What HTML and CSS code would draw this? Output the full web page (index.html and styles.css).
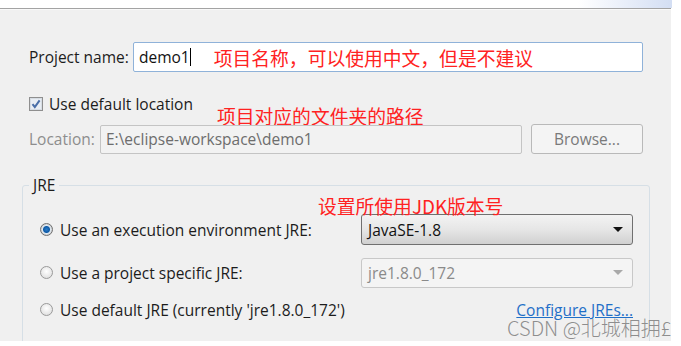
FILE: index.html
```html
<!DOCTYPE html>
<html lang="zh-CN">
  <head>
    <meta charset="UTF-8" />
    <title>New Java Project</title>
    <link rel="stylesheet" href="styles.css">
  </head>
  <body>
    <div class="topbar">
      <div class="topbar-glow"></div>
    </div>

    <div class="panel">
      <div class="name-row">
        <label class="field-label">Project name:</label>
        <div class="text-input">
          <span>demo1</span><span class="caret"></span>
          <span class="note note-inline">项目名称，可以使用中文，但是不建议</span>
        </div>
      </div>

      <div class="check-row">
        <span class="checkbox">
          <svg width="14" height="14" viewBox="0 0 14 14">
            <rect x="0.5" y="0.5" width="13" height="13" fill="#f4f4f4" stroke="#8f8f8f"/>
            <rect x="1.5" y="1.5" width="11" height="11" fill="#e9eef4" stroke="#d7dde4"/>
            <path d="M3.5 7.2 L5.8 10 L10.6 3.4" fill="none" stroke="#4a6fa8" stroke-width="2"/>
          </svg>
        </span>
        <span>Use default location</span>
        <span class="note note-location">项目对应的文件夹的路径</span>
      </div>

      <div class="loc-row">
        <label class="field-label field-label-muted">Location:</label>
        <div class="text-input text-input-disabled">E:\eclipse-workspace\demo1</div>
        <button class="browse">Browse...</button>
      </div>

      <fieldset class="jre-group">
        <legend>JRE</legend>
        <span class="note note-jdk">设置所使用JDK版本号</span>

        <div class="jre-row">
          <div class="option">
            <span class="radio radio-on"></span>
            <span>Use an execution environment JRE:</span>
          </div>
          <div class="combo">
            <span>JavaSE-1.8</span>
            <span class="combo-arrow"></span>
          </div>
        </div>

        <div class="jre-row">
          <div class="option">
            <span class="radio"></span>
            <span>Use a project specific JRE:</span>
          </div>
          <div class="combo combo-disabled">
            <span>jre1.8.0_172</span>
            <span class="combo-arrow"></span>
          </div>
        </div>

        <div class="jre-row jre-row-last">
          <div class="option">
            <span class="radio"></span>
            <span>Use default JRE (currently 'jre1.8.0_172')</span>
          </div>
          <a class="configure" href="#">Configure JREs...</a>
        </div>
      </fieldset>
    </div>

    <div class="watermark">CSDN @北城相拥£</div>
  </body>
</html>
```
FILE: styles.css
```css
* {
  margin: 0;
  padding: 0;
  box-sizing: border-box;
}

body {
  background: #ffffff;
  color: #1c1c1c;
  font-family: 'Open Sans', 'Noto Sans CJK SC', sans-serif;
  font-size: 15.5px;
  overflow: hidden;
}

.topbar {
  height: 8px;
  width: 672px;
  display: flex;
}

.topbar-glow {
  margin-left: auto;
  width: 94px;
  background: linear-gradient(to right, #ffffff, #d3def3);
}

.panel {
  position: relative;
  width: 671px;
  height: 333px;
  background: #f0f0f0;
  border-top: 1px solid #a3a3a3;
  box-shadow: inset 0 1px #f9f9f9;
  padding: 33px 0 0 22px;
  overflow: hidden;
}

.field-label {
  flex: none;
  padding-left: 7px;
}

.field-label-muted {
  color: #8d8d8d;
}

.name-row {
  display: flex;
  align-items: center;
  height: 30px;
}

.name-row .field-label {
  width: 111px;
}

.text-input {
  position: relative;
  display: flex;
  align-items: center;
  width: 510px;
  height: 30px;
  padding-left: 5px;
  background: #ffffff;
  border: 1px solid #8fb2d9;
  border-radius: 2px;
  color: #111111;
}

.caret {
  width: 1px;
  height: 18px;
  background: #000000;
}

.note {
  color: #ff2222;
  font-family: 'Noto Sans CJK SC', sans-serif;
  font-size: 18.8px;
  white-space: nowrap;
}

.note-inline {
  margin-left: 23px;
}

.check-row {
  position: relative;
  display: flex;
  align-items: center;
  gap: 6px;
  height: 16px;
  margin-top: 24px;
  padding-left: 7px;
}

.checkbox {
  display: flex;
}

.note-location {
  position: absolute;
  left: 195px;
  top: 6px;
}

.loc-row {
  display: flex;
  align-items: center;
  height: 30px;
  margin-top: 12px;
}

.loc-row .field-label {
  width: 78px;
}

.text-input-disabled {
  width: 422px;
  height: 29px;
  background: #f2f2f2;
  border-color: #c4c4c4;
  color: #6d6d6d;
}

.browse {
  width: 112px;
  height: 30px;
  margin-left: 9px;
  background: #f4f4f4;
  border: 1px solid #b9b9b9;
  border-radius: 3px;
  color: #7a7a7a;
  font-family: inherit;
  font-size: 15.5px;
}

.jre-group {
  position: relative;
  width: 628px;
  height: 200px;
  margin-top: 20px;
  padding: 18px 0 0 17px;
  border: 1px solid #d6dfe6;
  border-radius: 3px;
}

.jre-group legend {
  margin-left: -11px;
  padding: 0 4px;
}

.note-jdk {
  position: absolute;
  left: 295px;
  top: -4px;
}

.jre-row {
  display: flex;
  align-items: center;
  width: 593px;
  height: 31px;
  margin-bottom: 12px;
}

.jre-row-last {
  margin-top: -6px;
  justify-content: space-between;
}

.option {
  display: flex;
  align-items: center;
  gap: 7px;
  width: 321px;
  flex: none;
}

.radio {
  width: 13px;
  height: 13px;
  border-radius: 50%;
  border: 1px solid #9a9a9a;
  background: radial-gradient(circle at 50% 40%, #ffffff, #d8d8d8);
  flex: none;
}

.radio-on {
  border-color: #6f6f6f;
  background: radial-gradient(circle, #2a7cc8 0, #0d5aa7 3px, #dfe8f0 4px, #c9c9c9 6px);
}

.combo {
  display: flex;
  align-items: center;
  justify-content: space-between;
  width: 272px;
  height: 31px;
  padding: 0 9px 0 6px;
  background: linear-gradient(#f3f3f3, #e6e6e6 50%, #d0d0d0);
  border: 1px solid #707070;
  border-radius: 3px;
  color: #111111;
}

.combo-arrow {
  width: 0;
  height: 0;
  border-left: 5px solid transparent;
  border-right: 5px solid transparent;
  border-top: 5px solid #111111;
}

.combo-disabled {
  height: 30px;
  background: #f4f4f4;
  border-color: #c8c8c8;
  color: #8a8a8a;
}

.combo-disabled .combo-arrow {
  border-top-color: #a9a9a9;
}

.configure {
  color: #1f6fc8;
  text-decoration: underline;
}

.watermark {
  position: absolute;
  left: 507px;
  top: 317px;
  color: rgba(110, 110, 110, 0.75);
  font-family: 'Noto Sans CJK SC', sans-serif;
  font-size: 20px;
  font-weight: 300;
  line-height: 1.1;
  white-space: nowrap;
}
```
